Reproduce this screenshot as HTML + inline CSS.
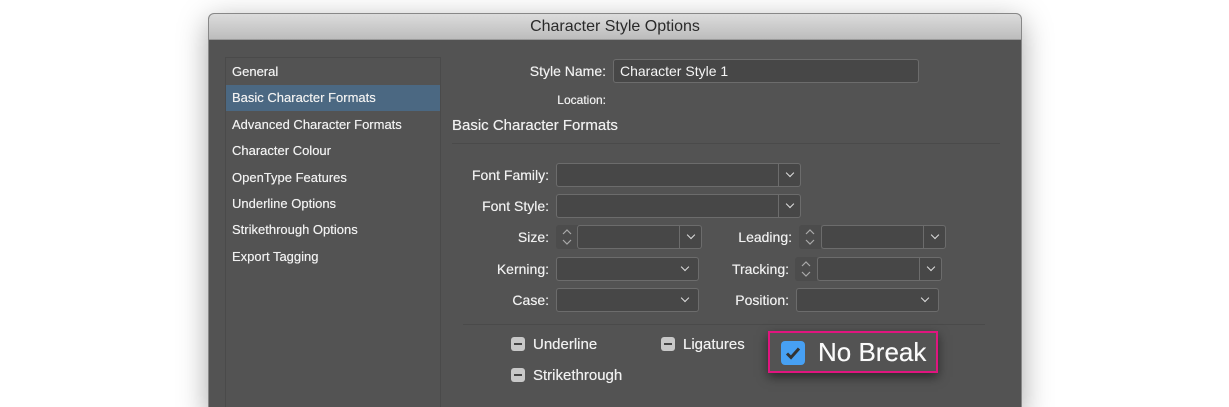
<!DOCTYPE html>
<html><head><style>
*{margin:0;padding:0;box-sizing:border-box}
html,body{width:1229px;height:407px;overflow:hidden}
body{background:#fff;position:relative;font-family:"Liberation Sans",sans-serif;color:#eee}
.win{position:absolute;left:208px;top:13px;width:814px;height:400px;border-radius:6px 6px 0 0;background:#535353;box-shadow:0 8px 30px rgba(0,0,0,.35);border:1px solid #888;overflow:hidden}
.title{position:absolute;left:0;top:0;width:100%;height:26px;background:linear-gradient(#dcdcdc,#bcbcbc);border-bottom:1px solid #9a9a9a;text-align:center;color:#2a2a2a;font-size:16px;line-height:26px}
.a{position:absolute}
.side{left:225px;top:57px;width:216px;height:360px;border:1px solid #4a4a4a;background:#535353}
.item{position:absolute;left:232px;font-size:13px;color:#f0f0f0;text-shadow:0 0 .4px #fff}
.sel{left:226px;top:85px;width:214px;height:26px;background:#4b6882}
.lbl{position:absolute;font-size:14px;color:#f0f0f0;text-align:right;white-space:nowrap;text-shadow:0 0 .4px #fff}
.f{position:absolute;background:#474747;border:1px solid #6c6c6c;border-radius:3px;height:24px}
.dd{position:absolute;top:0;bottom:0;border-left:1px solid #6c6c6c;width:22px;right:0}
.chev{position:absolute;width:6px;height:6px;border-right:1.5px solid #ddd;border-bottom:1.5px solid #ddd;transform:rotate(45deg)}
.spin{position:absolute;background:#4c4c4c;border-radius:3px 0 0 3px;height:24px;width:22px}
.line{position:absolute;height:1px;background:#4a4a4a}
.cb{position:absolute;width:14px;height:14px;background:#c8c8c8;border-radius:3px}
.cb:after{content:"";position:absolute;left:3px;top:6px;width:8px;height:2px;background:#444}
</style></head><body>
<div class="win"><div class="title">Character Style Options</div></div>
<div class="a side"></div>
<div class="a sel"></div>
<div class="item" style="top:64px">General</div>
<div class="item" style="top:90px">Basic Character Formats</div>
<div class="item" style="top:117px">Advanced Character Formats</div>
<div class="item" style="top:143px">Character Colour</div>
<div class="item" style="top:170px">OpenType Features</div>
<div class="item" style="top:196px">Underline Options</div>
<div class="item" style="top:222px">Strikethrough Options</div>
<div class="item" style="top:249px">Export Tagging</div>

<div class="lbl" style="right:623px;top:63px">Style Name:</div>
<div class="f" style="left:613px;top:59px;width:306px;font-size:14px;padding:3px 0 0 6px;color:#f5f5f5">Character Style 1</div>
<div class="lbl" style="right:623px;top:93px;font-size:12px">Location:</div>
<div class="lbl" style="left:452px;top:117px;font-size:15px;text-align:left">Basic Character Formats</div>
<div class="line" style="left:452px;top:143px;width:548px"></div>

<div class="lbl" style="right:680px;top:167px">Font Family:</div>
<div class="f" style="left:556px;top:163px;width:245px"><div class="dd"><div class="chev" style="left:8px;top:6px"></div></div></div>
<div class="lbl" style="right:680px;top:198px">Font Style:</div>
<div class="f" style="left:556px;top:194px;width:245px"><div class="dd"><div class="chev" style="left:8px;top:6px"></div></div></div>

<svg width="0" height="0" style="position:absolute"><defs><g id="sp"><path d="M7 9l4-4 4 4M7 15l4 4 4-4" stroke="#aaa" stroke-width="1.2" fill="none"/></g></defs></svg>

<div class="lbl" style="right:680px;top:229px">Size:</div>
<div class="spin" style="left:556px;top:225px"><svg width="22" height="24"><use href="#sp"/></svg></div>
<div class="f" style="left:577px;top:225px;width:125px"><div class="dd"><div class="chev" style="left:8px;top:6px"></div></div></div>
<div class="lbl" style="right:437px;top:229px">Leading:</div>
<div class="spin" style="left:799px;top:225px"><svg width="22" height="24"><use href="#sp"/></svg></div>
<div class="f" style="left:821px;top:225px;width:125px"><div class="dd"><div class="chev" style="left:8px;top:6px"></div></div></div>

<div class="lbl" style="right:680px;top:261px">Kerning:</div>
<div class="f" style="left:556px;top:257px;width:143px"><div class="chev" style="right:10px;top:6px"></div></div>
<div class="lbl" style="right:440px;top:261px">Tracking:</div>
<div class="spin" style="left:795px;top:257px"><svg width="22" height="24"><use href="#sp"/></svg></div>
<div class="f" style="left:817px;top:257px;width:125px"><div class="dd"><div class="chev" style="left:8px;top:6px"></div></div></div>

<div class="lbl" style="right:680px;top:292px">Case:</div>
<div class="f" style="left:556px;top:288px;width:143px"><div class="chev" style="right:10px;top:6px"></div></div>
<div class="lbl" style="right:440px;top:292px">Position:</div>
<div class="f" style="left:796px;top:288px;width:143px"><div class="chev" style="right:10px;top:6px"></div></div>

<div class="line" style="left:463px;top:324px;width:522px"></div>
<div class="cb" style="left:511px;top:337px"></div><div class="lbl" style="left:533px;top:336px;text-align:left;font-size:15px">Underline</div>
<div class="cb" style="left:661px;top:337px"></div><div class="lbl" style="left:683px;top:336px;text-align:left;font-size:15px">Ligatures</div>
<div class="cb" style="left:511px;top:368px"></div><div class="lbl" style="left:533px;top:367px;text-align:left;font-size:15px">Strikethrough</div>

<div class="a" style="left:768px;top:331px;width:170px;height:42px;border:2px solid #e0157f;background:#535353;box-shadow:0 4px 10px rgba(0,0,0,.5)"></div>
<div class="a" style="left:781px;top:341px;width:24px;height:24px;background:#47a0f3;border-radius:4px">
<svg width="24" height="24" viewBox="0 0 24 24"><path d="M6 12.5l4 4 8-9" stroke="#333" stroke-width="3" fill="none"/></svg></div>
<div class="lbl" style="left:818px;top:337px;font-size:26px;text-align:left;color:#fafafa">No Break</div>
</body></html>
